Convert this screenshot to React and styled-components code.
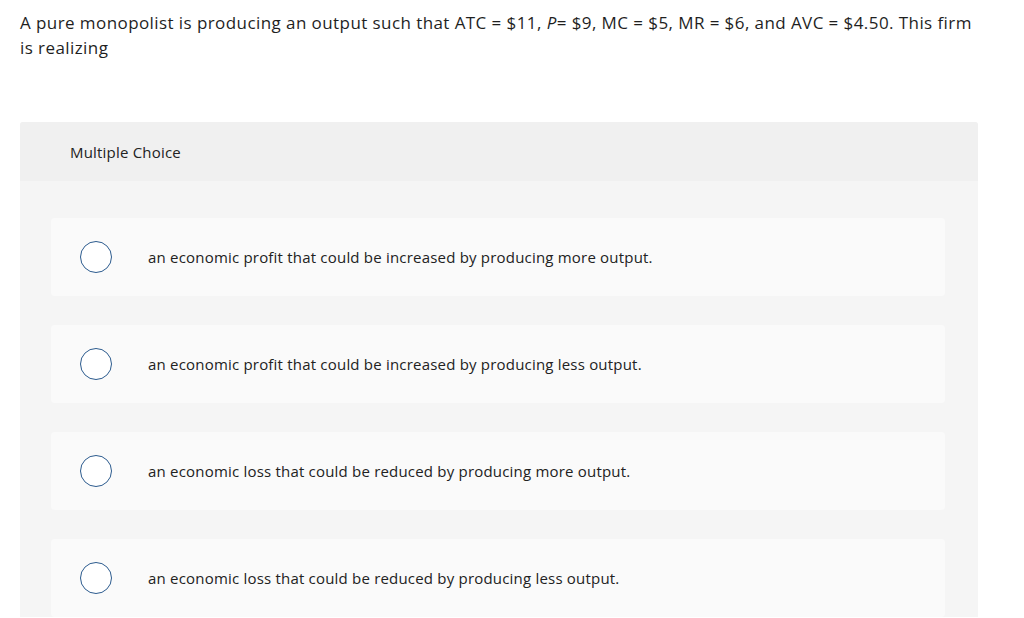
import React from 'react';
import styled, {createGlobalStyle} from 'styled-components';

const GlobalStyle = createGlobalStyle`
  body {
    margin: 0;
    background: #ffffff;
    font-family: "Open Sans", Lato, sans-serif;
    font-variant-ligatures: none;
    color: #222222;
  }
`;

const Page = styled.div`
  padding: 10px 46px 0 20px;
`;

const Question = styled.p`
  margin: 0;
  max-width: 956px;
  font-size: 17px;
  line-height: 25px;
  letter-spacing: 0.42px;
  color: #1f1f1f;
`;

const Panel = styled.section`
  margin-top: 62px;
  background: #f5f5f5;
  border-radius: 3px 3px 0 0;
`;

const PanelHeader = styled.div`
  height: 59px;
  display: flex;
  align-items: center;
  padding-left: 50px;
  background: #f0f0f0;
  border-radius: 3px 3px 0 0;
  font-size: 15px;
  letter-spacing: 0.2px;
  color: #222222;
`;

const OptionList = styled.div`
  display: flex;
  flex-direction: column;
  gap: 29px;
  padding: 37px 33px 0 31px;
`;

const Option = styled.label`
  height: 78px;
  display: flex;
  align-items: center;
  background: #fafafa;
  border-radius: 4px;
  padding-left: 29px;
  cursor: pointer;
`;

const Radio = styled.span`
  width: 30px;
  height: 30px;
  border: 1.5px solid #2c5b8e;
  border-radius: 50%;
  background: #ffffff;
  flex-shrink: 0;
`;

const OptionText = styled.span`
  margin-left: 36px;
  font-size: 15px;
  letter-spacing: 0.2px;
  color: #222222;
`;

const choices = [
  'an economic profit that could be increased by producing more output.',
  'an economic profit that could be increased by producing less output.',
  'an economic loss that could be reduced by producing more output.',
  'an economic loss that could be reduced by producing less output.',
];

function App() {
  return (
    <>
      <GlobalStyle />
      <Page>
        <Question>
          A pure monopolist is producing an output such that ATC = $11, <i>P</i>= $9, MC = $5, MR = $6, and AVC =
          $4.50. This firm is realizing
        </Question>
        <Panel>
          <PanelHeader>Multiple Choice</PanelHeader>
          <OptionList>
            {choices.map(choice => (
              <Option key={choice}>
                <Radio />
                <OptionText>{choice}</OptionText>
              </Option>
            ))}
          </OptionList>
        </Panel>
      </Page>
    </>
  );
}

export default App;
